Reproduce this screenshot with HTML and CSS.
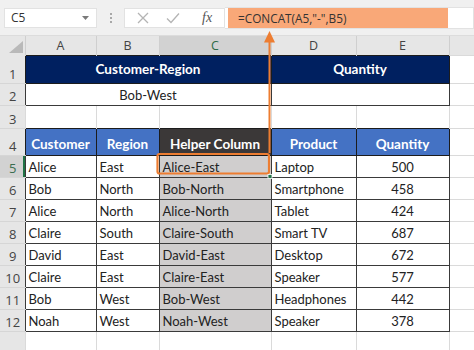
FILE: index.html
```html
<!DOCTYPE html>
<html lang="en">
<head>
    <meta charset="UTF-8">
    <meta name="viewport" content="width=device-width, initial-scale=1.0">
    <title>CONCAT helper column</title>
    <link rel="stylesheet" href="styles.css">
</head>
<body>
    <div class="app">
        <div class="formula-bar">
            <div class="name-box">
                <span>C5</span>
                <svg class="caret" width="7" height="4" viewBox="0 0 7 4"><path d="M0 0H7L3.5 4Z" fill="#7a7a7a"/></svg>
            </div>
            <div class="grip">
                <span></span><span></span><span></span>
            </div>
            <div class="fx-buttons">
                <svg class="btn" width="12" height="12" viewBox="0 0 12 12"><path d="M1 1L11 11M11 1L1 11" stroke="#b4b4b4" stroke-width="1.3" fill="none"/></svg>
                <svg class="btn" width="14" height="12" viewBox="0 0 14 12"><path d="M1 6.5L5 10.5L13 1.5" stroke="#b4b4b4" stroke-width="1.3" fill="none"/></svg>
                <span class="fx">fx</span>
            </div>
            <div class="formula-input">
                <div class="formula-text">=CONCAT(A5,"-",B5)</div>
            </div>
        </div>

        <table class="sheet">
            <colgroup>
                <col class="c-hdr"><col class="c-a"><col class="c-b"><col class="c-c"><col class="c-d"><col class="c-e"><col class="c-f">
            </colgroup>
            <tr class="r-hdr">
                <th class="corner"><svg width="14" height="12" viewBox="0 0 14 12"><path d="M14 0V12H0Z" fill="#b9b9b9"/></svg></th>
                <th class="col-hdr">A</th>
                <th class="col-hdr">B</th>
                <th class="col-hdr active">C</th>
                <th class="col-hdr">D</th>
                <th class="col-hdr">E</th>
                <th class="col-hdr last"></th>
            </tr>
            <tr class="r-title">
                <th class="row-hdr">1</th>
                <td class="title" colspan="3">Customer-Region</td>
                <td class="title" colspan="2">Quantity</td>
                <td class="grid"></td>
            </tr>
            <tr class="r-2">
                <th class="row-hdr">2</th>
                <td class="boxed center" colspan="3">Bob-West</td>
                <td class="boxed" colspan="2"></td>
                <td class="grid"></td>
            </tr>
            <tr class="r-3">
                <th class="row-hdr">3</th>
                <td class="grid above"></td>
                <td class="grid above"></td>
                <td class="grid above"></td>
                <td class="grid above"></td>
                <td class="grid above"></td>
                <td class="grid"></td>
            </tr>
            <tr class="r-head">
                <th class="row-hdr">4</th>
                <td class="head">Customer</td>
                <td class="head">Region</td>
                <td class="head helper">Helper Column</td>
                <td class="head">Product</td>
                <td class="head">Quantity</td>
                <td class="grid"></td>
            </tr>
            <tr>
                <th class="row-hdr active">5</th>
                <td class="boxed">Alice</td><td class="boxed">East</td><td class="boxed gray">Alice-East</td><td class="boxed">Laptop</td><td class="boxed center">500</td><td class="grid"></td>
            </tr>
            <tr>
                <th class="row-hdr">6</th>
                <td class="boxed">Bob</td><td class="boxed">North</td><td class="boxed gray">Bob-North</td><td class="boxed">Smartphone</td><td class="boxed center">458</td><td class="grid"></td>
            </tr>
            <tr>
                <th class="row-hdr">7</th>
                <td class="boxed">Alice</td><td class="boxed">North</td><td class="boxed gray">Alice-North</td><td class="boxed">Tablet</td><td class="boxed center">424</td><td class="grid"></td>
            </tr>
            <tr>
                <th class="row-hdr">8</th>
                <td class="boxed">Claire</td><td class="boxed">South</td><td class="boxed gray">Claire-South</td><td class="boxed">Smart TV</td><td class="boxed center">687</td><td class="grid"></td>
            </tr>
            <tr>
                <th class="row-hdr">9</th>
                <td class="boxed">David</td><td class="boxed">East</td><td class="boxed gray">David-East</td><td class="boxed">Desktop</td><td class="boxed center">672</td><td class="grid"></td>
            </tr>
            <tr>
                <th class="row-hdr">10</th>
                <td class="boxed">Claire</td><td class="boxed">East</td><td class="boxed gray">Claire-East</td><td class="boxed">Speaker</td><td class="boxed center">577</td><td class="grid"></td>
            </tr>
            <tr>
                <th class="row-hdr">11</th>
                <td class="boxed">Bob</td><td class="boxed">West</td><td class="boxed gray">Bob-West</td><td class="boxed">Headphones</td><td class="boxed center">442</td><td class="grid"></td>
            </tr>
            <tr>
                <th class="row-hdr">12</th>
                <td class="boxed">Noah</td><td class="boxed">West</td><td class="boxed gray">Noah-West</td><td class="boxed">Speaker</td><td class="boxed center">378</td><td class="grid"></td>
            </tr>
            <tr class="r-last">
                <th class="row-hdr"></th>
                <td class="grid"></td><td class="grid"></td><td class="grid"></td><td class="grid"></td><td class="grid"></td><td class="grid"></td>
            </tr>
        </table>

        <!-- annotation: selection outline + arrow to the formula -->
        <svg class="annotation" width="474" height="350" viewBox="0 0 474 350">
            <rect x="157.5" y="154" width="111.5" height="19.5" rx="2" fill="none" stroke="#ed7d31" stroke-width="2.2"/>
            <path d="M269.5 40V153" stroke="#ed7d31" stroke-width="2" fill="none"/>
            <path d="M264 42.5L269.5 31L275 42.5Z" fill="#ed7d31"/>
            <rect x="268" y="174.5" width="4" height="4" fill="#217346" stroke="#fff" stroke-width="0.8"/>
        </svg>
    </div>
</body>
</html>
```

FILE: styles.css
```css
body {
    margin: 0;
    background: #fff;
    font-family: Lato, "Open Sans", sans-serif;
}

.app {
    position: relative;
    width: 474px;
    height: 350px;
    overflow: hidden;
}

/* ---- formula bar ---- */

.formula-bar {
    display: flex;
    align-items: center;
    height: 36px;
    padding: 0 0 0 4px;
    background: #f0f0f0;
    border-bottom: 1px solid #dcdcdc;
    box-sizing: border-box;
}

.name-box {
    display: flex;
    align-items: center;
    justify-content: space-between;
    width: 93px;
    height: 20px;
    padding: 0 7px 0 6px;
    box-sizing: border-box;
    background: #fff;
    border: 1px solid #e2e2e2;
    font-family: "Open Sans", sans-serif;
    font-size: 12px;
    color: #333;
}

.grip {
    display: flex;
    flex-direction: column;
    gap: 2px;
    margin: 0 12px 0 13px;
}

.grip span {
    width: 2px;
    height: 2px;
    background: #a8a8a8;
}

.fx-buttons {
    display: flex;
    align-items: center;
    width: 101px;
    height: 20px;
    padding-left: 12px;
    box-sizing: border-box;
    background: #fff;
    border: 1px solid #e2e2e2;
}

.fx-buttons .btn {
    margin-right: 17px;
}

.fx-buttons .btn + .btn {
    margin-right: 22px;
}

.fx {
    font-family: "Liberation Serif", serif;
    font-style: italic;
    font-size: 14px;
    color: #555;
}

.formula-input {
    flex: 1;
    height: 20px;
    padding: 0 25px 0 3px;
    background: #fff;
    border: 1px solid #e2e2e2;
    border-left: none;
}

.formula-text {
    height: 20px;
    padding-left: 10px;
    background: #f9a878;
    font-family: "Open Sans", sans-serif;
    font-size: 11.8px;
    line-height: 20px;
    color: #333;
}

/* ---- grid ---- */

.sheet {
    border-collapse: collapse;
    table-layout: fixed;
    width: 474px;
    font-size: 13px;
    color: #222;
}

.c-hdr { width: 25px; }
.c-a { width: 71px; }
.c-b { width: 63px; }
.c-c { width: 112px; }
.c-d { width: 85px; }
.c-e { width: 93px; }
.c-f { width: 25px; }

th, td {
    padding: 0 0 0 3px;
    white-space: nowrap;
    overflow: hidden;
}

.r-hdr { height: 19px; }
.r-title { height: 28px; }
.r-2 { height: 22px; }
.r-3 { height: 23px; }
.r-head { height: 27px; }
tr { height: 22px; }
.r-last { height: 22px; }

.corner {
    background: #e6e6e6;
    border-right: 1px solid #cfcfcf;
    text-align: right;
    vertical-align: bottom;
    padding: 0 2px 2px 0;
    line-height: 0;
}

.col-hdr {
    background: #e6e6e6;
    border-right: 1px solid #cfcfcf;
    font-family: "Open Sans", sans-serif;
    font-weight: normal;
    font-size: 12.5px;
    color: #444;
    text-align: center;
    padding: 0;
}

.col-hdr.active {
    background: #d2d2d2;
    color: #2e6b47;
}

.col-hdr.last {
    border-right: none;
}

.row-hdr {
    background: #e6e6e6;
    border-bottom: 1px solid #d6d6d6;
    font-family: "Open Sans", sans-serif;
    font-weight: normal;
    font-size: 13px;
    color: #444;
    text-align: center;
    vertical-align: bottom;
    padding: 0 0 0 1px;
}

.row-hdr.active {
    background: #d2d2d2;
    color: #3b6e50;
    box-shadow: inset -2px 0 0 #217346;
}

.grid {
    border: 1px solid #dadada;
}

.grid.above {
    border-bottom: none;
}

.title {
    background: #002060;
    border: 1px solid #1c1c1c;
    color: #fff;
    font-weight: bold;
    font-size: 13.5px;
    text-align: center;
    padding: 0;
}

.boxed {
    border: 1px solid #3a3a3a;
    vertical-align: bottom;
    padding-bottom: 2px;
}

.center {
    text-align: center;
    padding-left: 0;
}

.head {
    background: #4472c4;
    border: 1px solid #1c1c1c;
    color: #fff;
    font-weight: bold;
    font-size: 13.5px;
    text-align: center;
    vertical-align: bottom;
    padding: 0 0 3px 0;
}

.head.helper {
    background: #3b3838;
}

.gray {
    background: #d0cece;
}

.annotation {
    position: absolute;
    left: 0;
    top: 0;
    pointer-events: none;
}
```
